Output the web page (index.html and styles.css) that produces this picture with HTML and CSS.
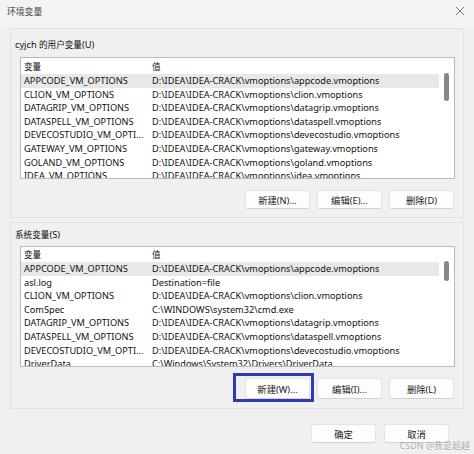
FILE: index.html
```html
<!DOCTYPE html>
<html lang="zh-CN">
<head>
    <meta charset="UTF-8">
    <title>环境变量</title>
    <link rel="stylesheet" href="styles.css">
</head>
<body>

<div class="dialog">
    <!-- Title bar -->
    <div class="titlebar">
        <span class="title">环境变量</span>
        <svg class="close" width="10" height="10" viewBox="0 0 10 10">
            <path d="M1 1 L9 9 M9 1 L1 9" stroke="#7a7a7a" stroke-width="1" fill="none"/>
        </svg>
    </div>

    <div class="content">
        <!-- User variables -->
        <div class="group user-group">
            <div class="group-label">cyjch <span class="cjk">的用户变量</span>(U)</div>
            <div class="list user-list">
                <div class="rows">
                    <div class="row head"><span class="name cjk">变量</span><span class="value cjk">值</span></div>
                    <div class="row selected"><span class="name">APPCODE_VM_OPTIONS</span><span class="value">D:\IDEA\IDEA-CRACK\vmoptions\appcode.vmoptions</span></div>
                    <div class="row"><span class="name">CLION_VM_OPTIONS</span><span class="value">D:\IDEA\IDEA-CRACK\vmoptions\clion.vmoptions</span></div>
                    <div class="row"><span class="name">DATAGRIP_VM_OPTIONS</span><span class="value">D:\IDEA\IDEA-CRACK\vmoptions\datagrip.vmoptions</span></div>
                    <div class="row"><span class="name">DATASPELL_VM_OPTIONS</span><span class="value">D:\IDEA\IDEA-CRACK\vmoptions\dataspell.vmoptions</span></div>
                    <div class="row"><span class="name">DEVECOSTUDIO_VM_OPTIONS</span><span class="value">D:\IDEA\IDEA-CRACK\vmoptions\devecostudio.vmoptions</span></div>
                    <div class="row"><span class="name">GATEWAY_VM_OPTIONS</span><span class="value">D:\IDEA\IDEA-CRACK\vmoptions\gateway.vmoptions</span></div>
                    <div class="row"><span class="name">GOLAND_VM_OPTIONS</span><span class="value">D:\IDEA\IDEA-CRACK\vmoptions\goland.vmoptions</span></div>
                    <div class="row"><span class="name">IDEA_VM_OPTIONS</span><span class="value">D:\IDEA\IDEA-CRACK\vmoptions\idea.vmoptions</span></div>
                </div>
                <div class="scrollbar"><div class="thumb user-thumb"></div></div>
            </div>
            <div class="buttons">
                <button class="btn">新建(N)...</button>
                <button class="btn">编辑(E)...</button>
                <button class="btn">删除(D)</button>
            </div>
        </div>

        <!-- System variables -->
        <div class="group system-group">
            <div class="group-label"><span class="cjk">系统变量</span>(S)</div>
            <div class="list system-list">
                <div class="rows">
                    <div class="row head"><span class="name cjk">变量</span><span class="value cjk">值</span></div>
                    <div class="row selected"><span class="name">APPCODE_VM_OPTIONS</span><span class="value">D:\IDEA\IDEA-CRACK\vmoptions\appcode.vmoptions</span></div>
                    <div class="row"><span class="name">asl.log</span><span class="value">Destination=file</span></div>
                    <div class="row"><span class="name">CLION_VM_OPTIONS</span><span class="value">D:\IDEA\IDEA-CRACK\vmoptions\clion.vmoptions</span></div>
                    <div class="row"><span class="name">ComSpec</span><span class="value">C:\WINDOWS\system32\cmd.exe</span></div>
                    <div class="row"><span class="name">DATAGRIP_VM_OPTIONS</span><span class="value">D:\IDEA\IDEA-CRACK\vmoptions\datagrip.vmoptions</span></div>
                    <div class="row"><span class="name">DATASPELL_VM_OPTIONS</span><span class="value">D:\IDEA\IDEA-CRACK\vmoptions\dataspell.vmoptions</span></div>
                    <div class="row"><span class="name">DEVECOSTUDIO_VM_OPTIONS</span><span class="value">D:\IDEA\IDEA-CRACK\vmoptions\devecostudio.vmoptions</span></div>
                    <div class="row"><span class="name">DriverData</span><span class="value">C:\Windows\System32\Drivers\DriverData</span></div>
                </div>
                <div class="scrollbar"><div class="thumb system-thumb"></div></div>
            </div>
            <div class="buttons">
                <button class="btn">新建(W)...</button>
                <button class="btn">编辑(I)...</button>
                <button class="btn">删除(L)</button>
            </div>
        </div>

        <!-- OK / Cancel -->
        <div class="footer">
            <button class="btn">确定</button>
            <button class="btn">取消</button>
        </div>
    </div>

    <!-- annotation box drawn over the screenshot -->
    <div class="mark"></div>
    <div class="watermark">CSDN @我是超越</div>
</div>

</body>
</html>
```

FILE: styles.css
```css
body {
    margin: 0;
    background-color: #f0f0f0;
    font-family: "Noto Sans", "Noto Sans CJK SC", sans-serif;
    font-size: 9.2px;
    color: #111;
}
.dialog {
    position: relative;
    width: 474px;
    height: 454px;
    overflow: hidden;
    background-color: #f0f0f0;
}
.cjk {
    font-size: 8.6px;
}

.titlebar {
    height: 28px;
    display: flex;
    align-items: center;
    justify-content: space-between;
    padding: 0 9px 6px 7px;
    box-sizing: border-box;
    background-color: #f3f3f3;
}
.title {
    font-size: 8.8px;
    color: #444;
}

.content {
    padding: 0 10px;
}
.group {
    display: flex;
    flex-direction: column;
    border: 1px solid #e1e1e1;
    box-sizing: border-box;
}
.user-group {
    height: 190px;
    padding: 9px 8px 0 9px;
}
.system-group {
    height: 187px;
    margin-top: 4px;
    padding: 5px 8px 0 9px;
}
.group-label {
    height: 14px;
    line-height: 14px;
    margin-left: -5px;
    font-size: 9.2px;
}

.list {
    display: flex;
    background: #fff;
    border: 1px solid #b9b9b9;
    box-sizing: border-box;
    overflow: hidden;
}
.user-list {
    height: 122px;
    margin-top: 5px;
    padding-top: 2px;
}
.system-list {
    height: 121px;
    margin-top: 4px;
    padding-top: 1px;
}
.rows {
    flex: 1;
    min-width: 0;
}
.row {
    display: flex;
    height: 13.6px;
    line-height: 13.6px;
    white-space: nowrap;
}
.row.head {
    height: 14px;
    line-height: 14px;
}
.row.selected {
    background-color: #e8e8e8;
}
.name {
    width: 128px;
    padding: 0 0 0 3px;
    box-sizing: border-box;
    overflow: hidden;
    text-overflow: ellipsis;
    flex-shrink: 0;
}
.value {
    padding-left: 3px;
    overflow: hidden;
}
.scrollbar {
    width: 15px;
    flex-shrink: 0;
    display: flex;
    justify-content: center;
    background: #fff;
}
.thumb {
    width: 5px;
    border-radius: 3px;
    background-color: #878787;
}
.user-thumb {
    height: 28px;
    margin-top: 13px;
}
.system-thumb {
    height: 20px;
    margin-top: 13px;
}

.buttons {
    display: flex;
    justify-content: flex-end;
    gap: 7px;
    margin-top: 11px;
    padding-right: 1px;
}
.btn {
    width: 65px;
    height: 19px;
    padding: 0;
    font-family: inherit;
    font-size: 9.3px;
    color: #1a1a1a;
    background-color: #fdfdfd;
    border: 1px solid #e4e4e4;
    border-bottom-color: #d2d2d2;
    border-radius: 3px;
}
.system-group .btn {
    height: 21px;
}

.footer {
    display: flex;
    justify-content: flex-end;
    gap: 8px;
    margin-top: 15px;
    padding-right: 15px;
}

.mark {
    position: absolute;
    left: 233px;
    top: 373px;
    width: 81px;
    height: 29px;
    border: 3px solid #2c3cb2;
    box-sizing: border-box;
}
.watermark {
    position: absolute;
    right: 4px;
    bottom: 2px;
    font-size: 9px;
    color: rgba(120, 120, 120, 0.55);
}
```
